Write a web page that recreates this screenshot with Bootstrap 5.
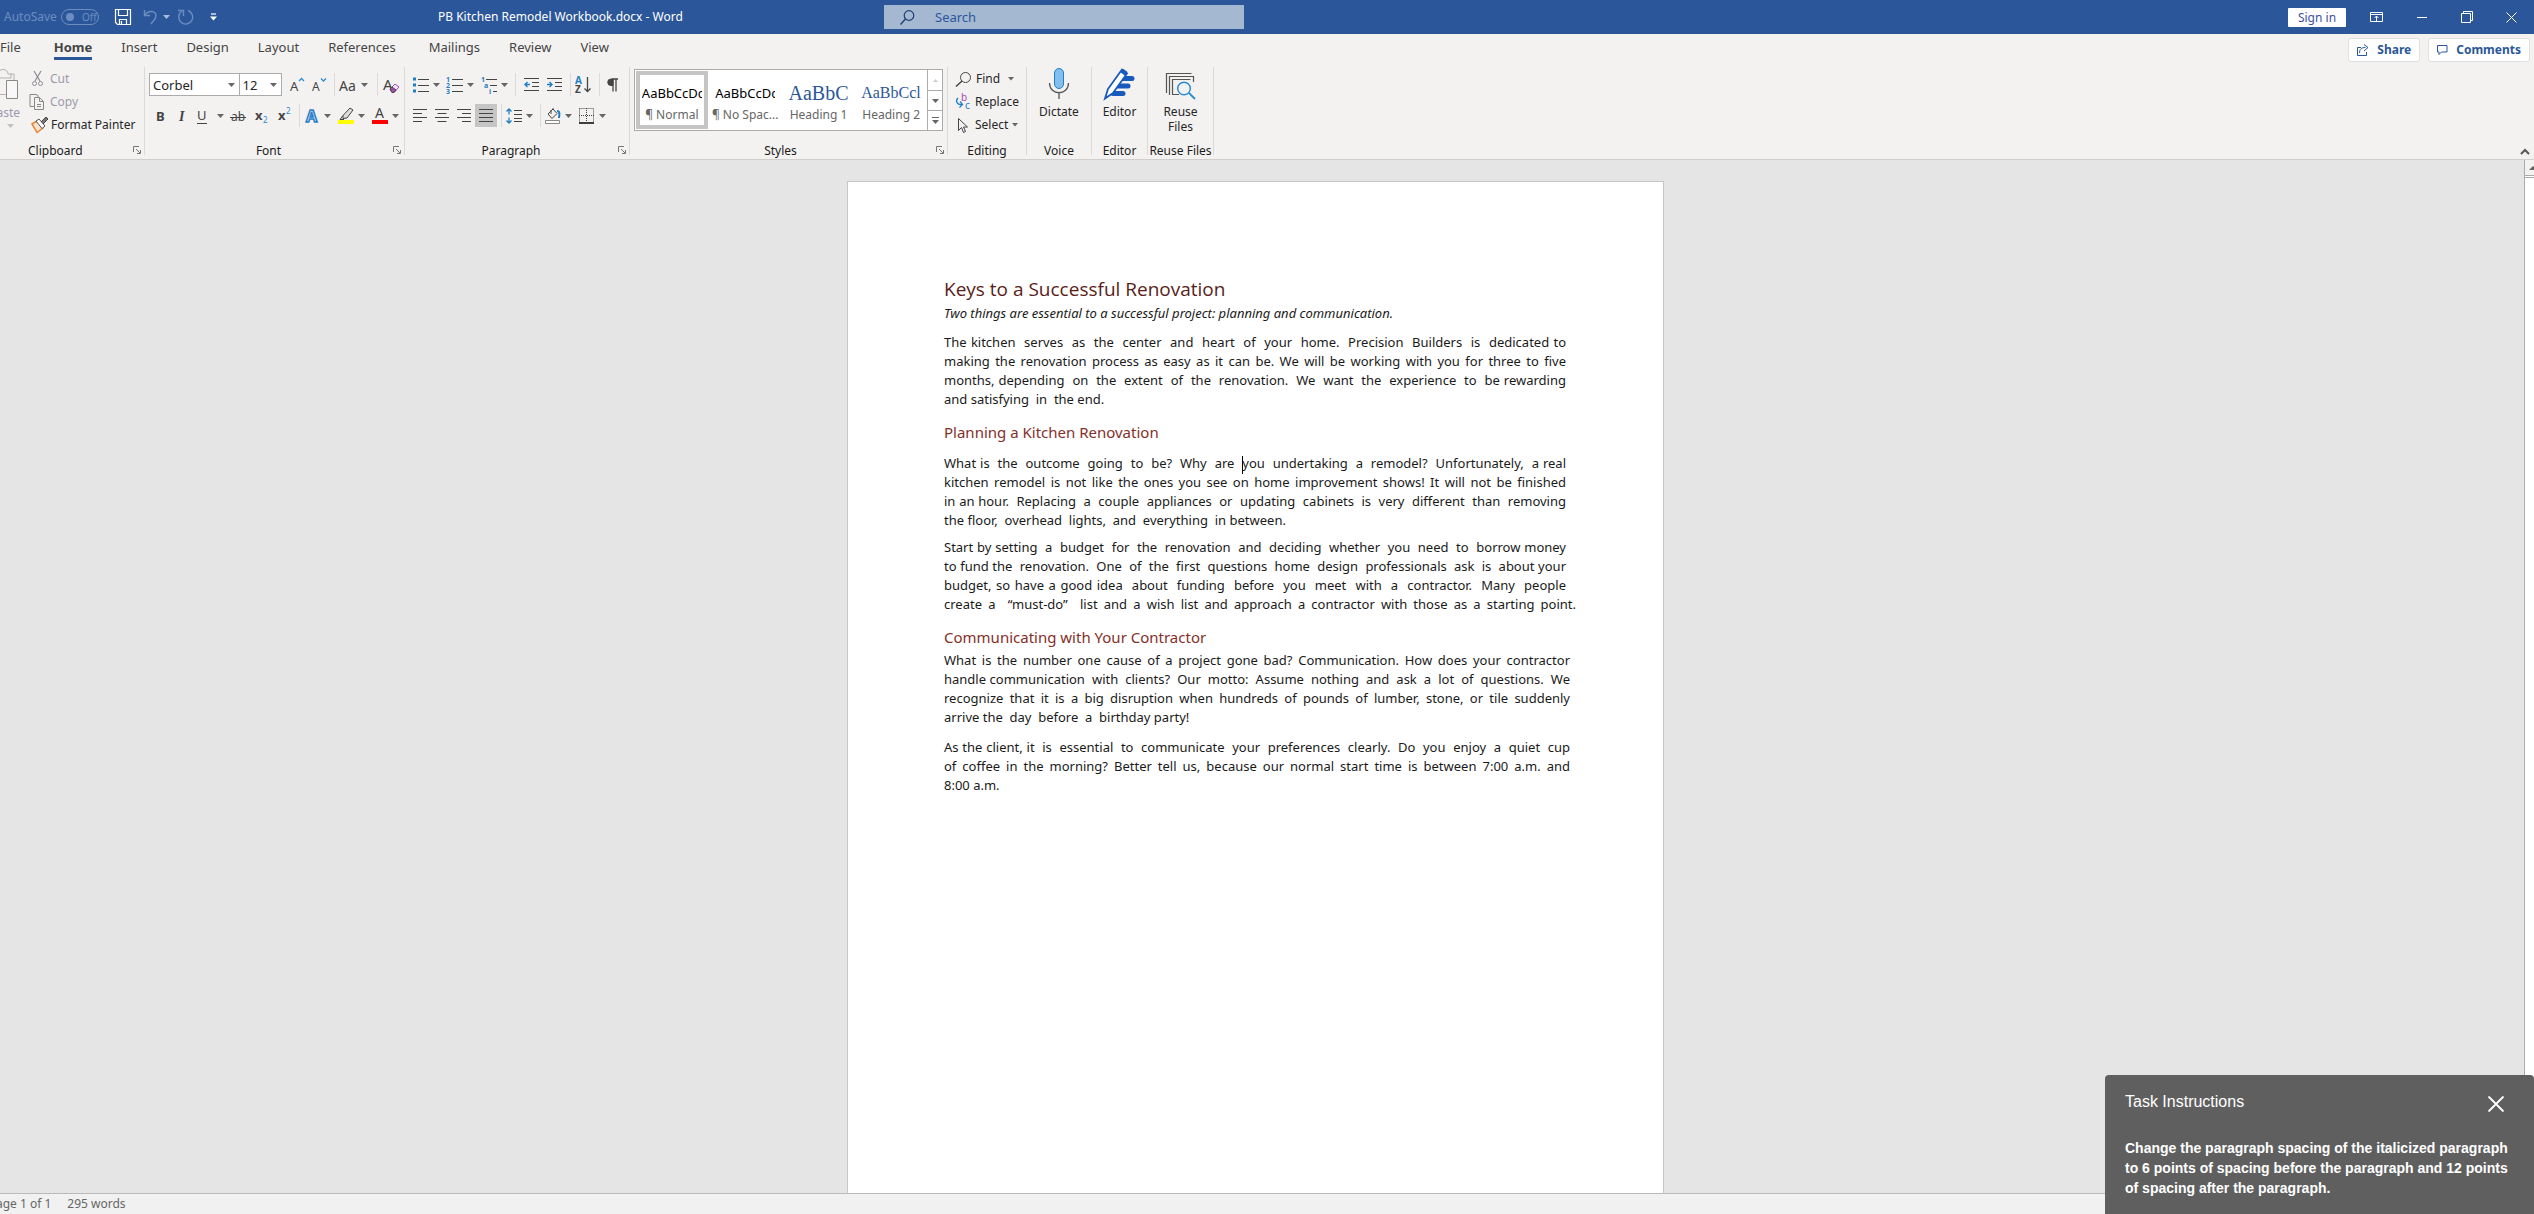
<!DOCTYPE html>
<html lang="en">
<head>
<meta charset="utf-8">
<meta name="viewport" content="width=device-width, initial-scale=1">
<title>PB Kitchen Remodel Workbook.docx - Word</title>
<link href="https://cdn.jsdelivr.net/npm/bootstrap@5.3.0/dist/css/bootstrap.min.css" rel="stylesheet">
<style>
body{font:12px/16px "Noto Sans","Open Sans",sans-serif;color:#262626;background:#e5e5e5;overflow:hidden}
svg{display:block;flex:none;fill:none;stroke:#444;overflow:visible}
button{font:inherit;color:inherit}
.titlebar{height:34px;background:#2b579a;color:#fff}
.titlebar svg{stroke:#fff}
.quick{width:438px;color:#6d8dc0}
.quick .dim{margin-left:12px}
.quick .dim svg{stroke:#6d8dc0}
.autosave{width:38px;height:16px;border:1px solid #6d8dc0;border-radius:8px;font-size:10px;line-height:12px}
.autosave i{width:8px;height:8px;border-radius:50%;background:#6d8dc0}
.docname{width:446px}
.searchbox{width:360px;height:24px;background:#a5b8d2;color:#2b579a}
.searchbox svg{stroke:#1e3f73}
.searchbox input{font-size:13px;color:#2b579a;outline:0}
.searchbox input::placeholder{color:#2b579a;opacity:1}
.signin{width:58px;height:19px;background:#fff;color:#3d4fa3;border-radius:1px;line-height:17px}
.wbtn{width:45px;height:34px}
.tabsrow{height:32px;background:#f3f2f1;color:#444;font-size:13px}
.tabsrow a{color:#444;height:26px;padding-top:5px;border-bottom:3px solid transparent}
.tabsrow a.active{font-weight:700;border-color:#2b579a}
.tabset{gap:29px;margin-left:-4px}
.pill{height:24px;background:#fff;border:1px solid #e1dfdd;border-radius:3px;color:#2b579a;font-size:12px;font-weight:700}
.pill svg{stroke:#2b579a}
.ribbon{height:94px;background:#f3f2f1;border-bottom:1px solid #d0cfce}
.grp{border-right:1px solid #dcdad8;height:88px;margin-top:1px;position:relative}
.toolpad{padding-top:6px}
.grplabel{height:16px;margin-top:auto;margin-bottom:-4px;color:#1b1b1b}
.grp .launch{position:absolute;right:2px;bottom:0;width:9px;height:9px}
.g-clip{width:145px}.g-font{width:260px}.g-para{width:225px}.g-styles{width:318px}
.g-edit{width:79px}.g-voice{width:65px}.g-editor{width:56px}.g-reuse{width:66px}
.tb{border:0;background:transparent;padding:0;height:23px;display:flex;align-items:center;justify-content:center;flex:none}
.w22{width:22px}.w24{width:24px}
.w34{width:34px;justify-content:flex-start;gap:4px}
.on{background:#c5c5c5}
.vr1{width:1px;height:23px;background:#dcdad8;flex:none}
.trow{height:23px;margin-bottom:8px}
.trow svg text,.bigtxt{stroke:none;fill:#444;font-family:"Noto Sans",sans-serif}
.muted{color:#9d9aac}
.car{fill:#666;stroke:none}
.combo{height:23px;border:1px solid #ababab;border-radius:0;background:#fff url("data:image/svg+xml,%3Csvg xmlns='http://www.w3.org/2000/svg' width='7' height='4'%3E%3Cpath d='M0 0h7L3.500 4z' fill='%23666'/%3E%3C/svg%3E") no-repeat right 4px center;appearance:none;padding:0 3px;font:13px "Noto Sans",sans-serif;color:#262626}
.c-face{width:92px}.c-size{width:44px;margin-left:-1px}
.clipcol{gap:7px;padding-top:4px}
.paste{width:24px;overflow:hidden}
.gallery{height:62px;border:1px solid #ababab;background:#fff;margin-top:2px}
.sty{width:73px;height:58px;border:4px solid transparent;background:#fff;padding:0;margin:1px 0 1px 1px;color:#666;white-space:nowrap}
.sty.sel{border-color:#c5c5c5}
.sty .smp{width:60px;height:28px;font-size:13px;line-height:28px;overflow:hidden;color:#000;margin:2px auto 0;text-align:left}
.sty .h1s,.sty .h2s{font-family:"Liberation Serif",serif;color:#2b579a}
.sty .h1s{font-size:20px;overflow:visible}
.sty .h2s{font-size:16px;overflow:visible}
.gscroll{width:15px;border-left:1px solid #ababab}
.gscroll button{height:20px;width:14px}
.gscroll button+button{border-top:1px solid #ababab}
.editcol{gap:7px}
.editcol button{height:16px;justify-content:flex-start}
.big{border:0;background:transparent;padding:0;text-align:center;line-height:15px}
.big svg{margin:0 auto 5px}
.workspace{background:#e5e5e5}
.paper{width:817px;background:#fff;border:1px solid #c6c6c6;border-bottom:0;margin-top:21px;margin-right:13px;padding:94px 0 0 96px;color:#1a1a1a}
.paper h1{font:19px/26px "Open Sans",sans-serif;color:#5a1d1a;margin:0 0 2px}
.paper h2{font:15px/20px "Noto Sans",sans-serif;color:#843029;margin:13px 0 12px}
.paper h2.tight{margin-bottom:4px}
.paper p{font-size:13px;line-height:19px;margin:0 0 11px;width:622px}
.paper p.near{margin-bottom:8px}
.paper p.intro{margin-bottom:10px}
.paper p.wider{width:626px}
.paper .ln{display:block;white-space:nowrap;text-align:justify;text-align-last:justify}
.paper .ln.long{width:632px}
.paper .end{display:block;white-space:nowrap}
.cursor{display:inline-block;width:1px;height:18px;background:#000;vertical-align:-4px;margin:-2px -1px -2px 0}
.vscroll{width:10px;border-left:1px solid #ababab;background:#fff}
.vscroll .up{height:16px;border-bottom:1px solid #ababab;background:#f3f2f1;overflow:hidden}
.vscroll .thumb{margin-top:1px;border-top:1px solid #ababab}
.status{height:21px;background:#f1f1f1;border-top:1px solid #bababa;color:#666}
.pagecount{margin-left:-4px}
.taskpanel{right:0;bottom:0;width:429px;height:139px;background:#5f5f5f;color:#fff;border-radius:4px 4px 0 0;padding:17px 26px 0 20px;font-family:"Liberation Sans",sans-serif}
.taskpanel h3{font-size:16px;line-height:20px;margin:0}
.taskpanel p{font-size:14px;line-height:20px;font-weight:700;margin:26px 0 0;white-space:nowrap}
</style>
<script src="https://cdn.jsdelivr.net/npm/bootstrap@5.3.0/dist/js/bootstrap.bundle.min.js"></script>
</head>
<body class="vh-100 d-flex flex-column">

<header class="titlebar d-flex align-items-center flex-shrink-0">
  <div class="quick d-flex align-items-center flex-shrink-0">
    <label class="ms-1" for="as">AutoSave</label>
    <button id="as" class="autosave bg-transparent p-0 d-flex align-items-center ms-1" type="button"><i class="ms-1 me-2"></i>Off</button>
    <button class="tb ms-3" type="button" aria-label="Save"><svg width="16" height="16"><path d="M.5.500h15v15h-13l-2-2zM3.500.500v6h9v-6M4.500 15.500v-5h7v5M6.500 12v3.500" stroke-width="1.200"/></svg></button>
    <span class="dim d-flex align-items-center">
      <button class="tb" type="button" aria-label="Undo"><svg width="16" height="16"><path d="M1.500 1v5.500H7M1.500 6.500C5 1 13 1 13 7c0 3-3 5-5 8" stroke-width="1.400"/></svg></button>
      <svg class="ms-1" width="7" height="4"><path d="M0 0h7L3.500 4z" fill="#a9bbd9" stroke="none"/></svg>
      <button class="tb ms-2" type="button" aria-label="Redo"><svg width="16" height="16"><path d="M0 1.500h5.500V7M10 1.500A7 7 0 1 1 3.500 2.500" stroke-width="1.400"/></svg></button>
    </span>
    <button class="tb ms-3" type="button" aria-label="Customize toolbar"><svg width="7" height="8"><path d="M1 1h5" stroke-width="1.200"/><path d="M0 3.500h7L3.500 7.500z" fill="#fff" stroke="none"/></svg></button>
  </div>
  <div class="docname flex-shrink-0">PB Kitchen Remodel Workbook.docx - Word</div>
  <div class="searchbox d-flex align-items-center ps-3">
    <svg width="15" height="15"><circle cx="9" cy="5.500" r="4.800" stroke-width="1.200"/><path d="M5.500 9L.5 14.500" stroke-width="1.300"/></svg>
    <input class="border-0 bg-transparent ms-3 p-1 flex-grow-1" type="text" placeholder="Search" aria-label="Search">
  </div>
  <div class="ms-auto d-flex align-items-center">
    <button class="signin border-0 p-0 me-2" type="button">Sign in</button>
    <button class="tb wbtn" type="button" aria-label="Ribbon display"><svg width="13" height="10"><path d="M.5.500h12v9H.5zM.5 2.500h12M6.500 9V4M4.500 6l2-2 2 2"/></svg></button>
    <button class="tb wbtn" type="button" aria-label="Minimize"><svg width="10" height="1"><path d="M0 .5h10"/></svg></button>
    <button class="tb wbtn" type="button" aria-label="Restore"><svg width="12" height="12"><path d="M.5 2.500h9v9h-9zM2.500 2.500v-2h9v9h-2"/></svg></button>
    <button class="tb wbtn" type="button" aria-label="Close"><svg width="11" height="11"><path d="M.5.500l10 10M10.500.500l-10 10"/></svg></button>
  </div>
</header>

<nav class="tabsrow d-flex flex-shrink-0">
  <div class="tabset d-flex">
    <a class="text-decoration-none ps-1" href="#">File</a>
    <a class="text-decoration-none active ms-1" href="#">Home</a>
    <a class="text-decoration-none" href="#">Insert</a>
    <a class="text-decoration-none" href="#">Design</a>
    <a class="text-decoration-none" href="#">Layout</a>
    <a class="text-decoration-none" href="#">References</a>
    <a class="text-decoration-none ms-1" href="#">Mailings</a>
    <a class="text-decoration-none" href="#">Review</a>
    <a class="text-decoration-none" href="#">View</a>
  </div>
  <div class="ms-auto d-flex pt-1 pe-1">
    <button class="pill d-flex align-items-center px-2 me-2" type="button"><svg class="me-2" width="12" height="12"><path d="M4 3.500H.5v8h9V8M2.500 9c0-4 2-5.500 6-5.500M7 .5l4 3-4 3.500"/></svg>Share</button>
    <button class="pill d-flex align-items-center px-2" type="button"><svg class="me-2" width="11" height="10"><path d="M.5.500h9.500v6.500H4.500l-2.500 2.500V7H.5z"/></svg>Comments</button>
  </div>
</nav>

<div class="ribbon d-flex flex-shrink-0">
  <section class="grp g-clip d-flex flex-column flex-shrink-0">
    <div class="d-flex">
      <button class="paste big muted d-block" type="button" aria-label="Paste"><svg width="24" height="32"><path d="M0 26.500h14M14 26V6h-4M-6 6h4c0-6 10-6 10 0h3v4H-8" stroke="#b5b3b0"/><path d="M6.500 12.500h11v18h-11z" fill="#f8f8f8" stroke="#8a8886"/></svg><span class="d-flex justify-content-end pe-1">Paste</span><svg class="mt-1" width="7" height="4"><path d="M-2 0h7L1.500 4z" fill="#c2c0be" stroke="none"/></svg></button>
      <div class="clipcol d-flex flex-column ps-1">
        <button class="tb justify-content-start muted p-0 h-auto" type="button"><svg class="me-1 ms-1" width="14" height="16"><path d="M2 0l6 10M9 0L3 10" stroke="#8f8d96" stroke-width="1.300"/><circle cx="2.500" cy="12.500" r="2" stroke="#8f8d96"/><circle cx="8.500" cy="12.500" r="2" stroke="#8f8d96"/></svg>Cut</button>
        <button class="tb justify-content-start muted p-0 h-auto" type="button"><svg class="me-1 ms-1" width="14" height="16"><path d="M6 3.500V1.500L4 .500h-6v12h4M2.500 3.500h5l4 4v8h-9zM7.500 3.500v4h4M5 10.500h4M5 12.500h4" stroke="#8a8886"/></svg>Copy</button>
        <button class="tb justify-content-start p-0 h-auto" type="button"><svg class="me-1 ms-1" width="15" height="16"><path d="M0 7l5-3 6 7-6 4.500z" fill="#fce4cc" stroke="#e8833a" stroke-width="1.500"/><path d="M4 4l3-2 6 7-3 2.500z" fill="#fff" stroke="#555"/><path d="M9 5l5-5 2 2-5 5" fill="#777"/></svg>Format Painter</button>
      </div>
    </div>
    <div class="grplabel ps-4 ms-1">Clipboard</div>
    <svg class="launch" viewBox="0 0 9 9"><path d="M.5 6V.500H6M3 3l4 4M7.500 4v3.500H4" stroke="#777"/></svg>
  </section>

  <section class="grp g-font d-flex flex-column flex-shrink-0 ps-1 toolpad">
    <div class="trow d-flex align-items-center">
      <select class="combo c-face" aria-label="Font"><option>Corbel</option></select>
      <select class="combo c-size" aria-label="Font size"><option>12</option></select>
      <button class="tb w22 ms-1" type="button" aria-label="Grow font"><svg width="14" height="16"><text x="0" y="14" font-size="13">A</text><path d="M9 4l2.500-2.500L14 4" stroke="#2a8dd4" stroke-width="1.300"/></svg></button>
      <button class="tb w22" type="button" aria-label="Shrink font"><svg width="14" height="16"><text x="0" y="14" font-size="12">A</text><path d="M9 1.500L11.500 4 14 1.500" stroke="#2a8dd4" stroke-width="1.300"/></svg></button>
      <span class="vr1 mx-1"></span>
      <button class="tb w34" type="button" aria-label="Change case"><svg width="18" height="16"><text x="0" y="14" font-size="14">Aa</text></svg><svg class="car" width="7" height="4"><path d="M0 0h7L3.500 4z"/></svg></button>
      <span class="vr1 mx-1"></span>
      <button class="tb w22" type="button" aria-label="Clear formatting"><svg width="20" height="16"><text x="0" y="13" font-size="15">A</text><path d="M7 12l5-5 4 3-5 5.500H9z" fill="#f3e3f6" stroke="#a44cb5"/><path d="M7 12l2-2 4 3-2 2.500H9z" fill="#a44cb5"/></svg></button>
    </div>
    <div class="trow d-flex align-items-center">
      <button class="tb w22" type="button" aria-label="Bold"><svg width="9" height="16"><text x="0" y="13" font-size="13" font-weight="700">B</text></svg></button>
      <button class="tb w22" type="button" aria-label="Italic"><svg width="8" height="16"><text x="1" y="13" font-size="14" style="font-family:'Liberation Serif'" font-style="italic" font-weight="700">I</text></svg></button>
      <button class="tb w34" type="button" aria-label="Underline"><svg width="16" height="16"><text x="4" y="12" font-size="13">U</text><path d="M4 15.500h10"/></svg><svg class="car ms-1" width="7" height="4"><path d="M0 0h7L3.500 4z"/></svg></button>
      <button class="tb w22" type="button" aria-label="Strikethrough"><svg width="16" height="16"><text x="1" y="13" font-size="12">ab</text><path d="M0 9.500h16"/></svg></button>
      <button class="tb w24" type="button" aria-label="Subscript"><svg width="12" height="16"><text x="0" y="12" font-size="13" font-weight="700">x</text><text x="8" y="15" font-size="8" style="fill:#2a8dd4">2</text></svg></button>
      <button class="tb w22" type="button" aria-label="Superscript"><svg width="12" height="16"><text x="0" y="12" font-size="13" font-weight="700">x</text><text x="8" y="6" font-size="8" style="fill:#2a8dd4">2</text></svg></button>
      <span class="vr1 mx-1"></span>
      <button class="tb w34" type="button" aria-label="Text effects"><svg width="16" height="16"><text x="2" y="14" font-size="16" font-weight="700" style="fill:#d9ecfa;stroke:#2b7cc8;stroke-width:1.500px">A</text></svg><svg class="car" width="7" height="4"><path d="M0 0h7L3.500 4z"/></svg></button>
      <button class="tb w34" type="button" aria-label="Highlight"><svg width="16" height="16"><path d="M0 12h16v4H0z" fill="#ff0" stroke="none"/><path d="M5 7.500L12 0l3 2-6 8-4 .5zM5 7.500l-3 4h4" fill="#ddd"/></svg><svg class="car" width="7" height="4"><path d="M0 0h7L3.500 4z"/></svg></button>
      <button class="tb w34" type="button" aria-label="Font color"><svg width="16" height="16"><path d="M0 12h16v4H0z" fill="#f00" stroke="none"/><text x="3" y="10" font-size="14">A</text></svg><svg class="car" width="7" height="4"><path d="M0 0h7L3.500 4z"/></svg></button>
    </div>
    <div class="grplabel text-center pe-3">Font</div>
    <svg class="launch" viewBox="0 0 9 9"><path d="M.5 6V.500H6M3 3l4 4M7.500 4v3.500H4" stroke="#777"/></svg>
  </section>

  <section class="grp g-para d-flex flex-column flex-shrink-0 ps-1 toolpad">
    <div class="trow d-flex align-items-center">
      <button class="tb w34 ms-1" type="button" aria-label="Bullets"><svg width="16" height="16"><path d="M0 2h3M0 8h3M0 14h3" stroke="#1f7fc4" stroke-width="3"/><path d="M5 2.500h11M5 8.500h11M5 14.500h11"/></svg><svg class="car" width="7" height="4"><path d="M0 0h7L3.500 4z"/></svg></button>
      <button class="tb w34" type="button" aria-label="Numbering"><svg width="16" height="16"><text x="-1" y="5" font-size="7" font-weight="700" style="fill:#1f7fc4">1</text><text x="-1" y="11" font-size="7" font-weight="700" style="fill:#1f7fc4">2</text><text x="-1" y="17" font-size="7" font-weight="700" style="fill:#1f7fc4">3</text><path d="M5 2.500h11M5 8.500h11M5 14.500h11"/></svg><svg class="car" width="7" height="4"><path d="M0 0h7L3.500 4z"/></svg></button>
      <button class="tb w34" type="button" aria-label="Multilevel list"><svg width="16" height="16"><text x="0" y="5" font-size="7" font-weight="700" style="fill:#1f7fc4">1</text><text x="3" y="11" font-size="7" font-weight="700" style="fill:#1f7fc4">a</text><text x="8" y="17" font-size="7" font-weight="700" style="fill:#1f7fc4">i</text><path d="M5 2.500h11M9 8.500h7M12 14.500h4"/></svg><svg class="car" width="7" height="4"><path d="M0 0h7L3.500 4z"/></svg></button>
      <span class="vr1"></span>
      <button class="tb w24 ms-1" type="button" aria-label="Decrease indent"><svg width="16" height="14"><path d="M0 .5h15M8 4.500h7M8 8.500h7M0 12.500h15"/><path d="M6 6.500H1M3.500 4L1 6.500 3.500 9" stroke="#1f7fc4" stroke-width="1.400"/></svg></button>
      <button class="tb w22" type="button" aria-label="Increase indent"><svg width="16" height="14"><path d="M0 .5h15M8 4.500h7M8 8.500h7M0 12.500h15"/><path d="M0 6.500h5M2.500 4L5 6.500 2.500 9" stroke="#1f7fc4" stroke-width="1.400"/></svg></button>
      <span class="vr1 ms-1"></span>
      <button class="tb w24" type="button" aria-label="Sort"><svg width="16" height="18"><text x="0" y="8" font-size="10" font-weight="700" style="fill:#1f7fc4">A</text><text x="0" y="17" font-size="10" font-weight="700">Z</text><path d="M12.500 1v14.500M9.500 12.500l3 3 3-3" stroke-width="1.300"/></svg></button>
      <span class="vr1 ms-1"></span>
      <button class="tb w24" type="button" aria-label="Show paragraph marks"><svg width="11" height="14"><path d="M5 1H11M6 1v12.500M9 1v12.500" stroke-width="1.300"/><path d="M6 1H4a3.200 3.200 0 0 0 0 6.500h2z" fill="#444"/></svg></button>
    </div>
    <div class="trow d-flex align-items-center">
      <button class="tb w22" type="button" aria-label="Align left"><svg width="14" height="14"><path d="M0 .5h14M0 4.500h9M0 8.500h14M0 12.500h9"/></svg></button>
      <button class="tb w22" type="button" aria-label="Center"><svg width="14" height="14"><path d="M0 .5h14M2.500 4.500h9M0 8.500h14M2.500 12.500h9"/></svg></button>
      <button class="tb w22" type="button" aria-label="Align right"><svg width="14" height="14"><path d="M0 .5h14M5 4.500h9M0 8.500h14M5 12.500h9"/></svg></button>
      <button class="tb w22 on" type="button" aria-label="Justify"><svg width="14" height="14"><path d="M0 .5h14M0 4.500h14M0 8.500h14M0 12.500h14"/></svg></button>
      <span class="vr1 mx-1"></span>
      <button class="tb w34" type="button" aria-label="Line spacing"><svg width="16" height="16"><path d="M3 1v5.500M.5 3.500L3 1l2.500 2.500M3 9.500V15M.5 12.500L3 15l2.500-2.500" stroke="#1f7fc4" stroke-width="1.300"/><path d="M8 2.500h8M8 6.500h8M8 10.500h8M8 13.500h8"/></svg><svg class="car" width="7" height="4"><path d="M0 0h7L3.500 4z"/></svg></button>
      <span class="vr1 me-1"></span>
      <button class="tb w34" type="button" aria-label="Shading"><svg width="16" height="16"><path d="M.5 12.500h14v3H.5z" fill="#fff" stroke="#888"/><path d="M3 6l5-5 4 4.500-5 5zM8 1V0M6 2v4"/><path d="M12 3c3 0 2.500 3 2 7" stroke="#1f7fc4" stroke-width="2"/></svg><svg class="car" width="7" height="4"><path d="M0 0h7L3.500 4z"/></svg></button>
      <button class="tb w34" type="button" aria-label="Borders"><svg width="16" height="16"><path d="M.5.500h14v14M.5.500v14M7.500 0v14M0 7.500h15" stroke-dasharray="1 1"/><path d="M0 15h15" stroke="#000" stroke-width="1.500"/></svg><svg class="car" width="7" height="4"><path d="M0 0h7L3.500 4z"/></svg></button>
    </div>
    <div class="grplabel text-center pe-3">Paragraph</div>
    <svg class="launch" viewBox="0 0 9 9"><path d="M.5 6V.500H6M3 3l4 4M7.500 4v3.500H4" stroke="#777"/></svg>
  </section>

  <section class="grp g-styles d-flex flex-column flex-shrink-0 ps-1 pe-1">
    <div class="gallery d-flex">
      <button class="sty sel" type="button"><div class="smp">AaBbCcDc</div><div>¶ Normal</div></button>
      <button class="sty" type="button"><div class="smp">AaBbCcDc</div><div class="d-flex justify-content-center">¶ No Spac...</div></button>
      <button class="sty" type="button"><div class="smp h1s">AaBbC</div><div>Heading 1</div></button>
      <button class="sty" type="button"><div class="smp h2s">AaBbCcl</div><div>Heading 2</div></button>
      <div class="gscroll ms-auto d-flex flex-column">
        <button class="tb" type="button" aria-label="Previous styles"><svg width="7" height="4"><path d="M1 4h5L3.500 1z" fill="#ccc" stroke="none"/></svg></button>
        <button class="tb" type="button" aria-label="Next styles"><svg class="car" width="7" height="4"><path d="M0 0h7L3.500 4z"/></svg></button>
        <button class="tb" type="button" aria-label="More styles"><svg class="car" width="7" height="7"><path d="M0 0h7v1H0zM0 3h7L3.500 7z"/></svg></button>
      </div>
    </div>
    <div class="grplabel text-center pe-3">Styles</div>
    <svg class="launch" viewBox="0 0 9 9"><path d="M.5 6V.500H6M3 3l4 4M7.500 4v3.500H4" stroke="#777"/></svg>
  </section>

  <section class="grp g-edit d-flex flex-column flex-shrink-0 ps-2">
    <div class="editcol d-flex flex-column mt-1">
      <button class="tb" type="button"><svg class="me-1" width="16" height="15"><circle cx="9.500" cy="5.500" r="5"/><path d="M6 9L0 14.500" stroke-width="1.500"/></svg>Find<svg class="car ms-2" width="7" height="4"><path d="M0 0h6L3 3.500z"/></svg></button>
      <button class="tb" type="button"><svg class="me-1" width="15" height="16"><g class="bigtxt"><text x="5" y="7" font-size="10" style="fill:#a44cb5">b</text><text x="9" y="15" font-size="10" style="fill:#1f7fc4">c</text></g><path d="M2 4c-3 3-1 7 4 6.500M4 7.500l2.500 3-3 3" stroke="#1f7fc4" stroke-width="1.300"/></svg>Replace</button>
      <button class="tb" type="button"><svg class="me-1" width="15" height="15"><path d="M2.500.500v12l3-3 2 5 2-1-2-4.500h4z"/></svg>Select<svg class="car ms-1" width="6" height="4"><path d="M0 0h6L3 3.500z"/></svg></button>
    </div>
    <div class="grplabel text-center pe-2">Editing</div>
  </section>

  <section class="grp g-voice d-flex flex-column flex-shrink-0">
    <button class="big" type="button"><svg width="20" height="32"><rect x="5.500" y="1.500" width="9" height="20" rx="4.500" fill="#83beec" stroke="#1f7fc4"/><path d="M.5 16c0 13 19 13 19 0M10 26v6" stroke="#555" stroke-width="1.300"/></svg>Dictate</button>
    <div class="grplabel text-center">Voice</div>
  </section>
  <section class="grp g-editor d-flex flex-column flex-shrink-0">
    <button class="big" type="button"><svg width="31" height="32"><path d="M15 11.500h13M12 19h12M9 26.500h10" stroke="#185abd" stroke-width="5" stroke-linecap="round"/><path d="M4 22L18 2.500l5 4L9 26l-8 5.500z" fill="#fff" stroke="#185abd" stroke-width="1.800"/><path d="M16 5l3.500-3 4 3-2 4z" fill="#185abd" stroke="none"/></svg>Editor</button>
    <div class="grplabel text-center">Editor</div>
  </section>
  <section class="grp g-reuse d-flex flex-column flex-shrink-0">
    <button class="big" type="button"><svg width="30" height="32"><path d="M.5 26V6.500h25M3.500 28V9.500h24V15M6.500 27V12.500h18M6 27.500h7" stroke="#555" stroke-width="1.200"/><circle cx="18" cy="21.500" r="6.300" fill="#f3f2f1" stroke="#2a8dd4" stroke-width="1.500"/><path d="M23 26l6 6" stroke="#2a8dd4" stroke-width="1.800"/></svg>Reuse<br>Files</button>
    <div class="grplabel text-center text-nowrap">Reuse Files</div>
  </section>
  <button class="tb ms-auto align-self-end mt-auto me-1 h-auto pb-1" type="button" aria-label="Collapse the ribbon"><svg width="10" height="6"><path d="M1 5l4-4 4 4" stroke="#555" stroke-width="2"/></svg></button>
</div>

<main class="workspace d-flex flex-grow-1 overflow-hidden">
  <div class="flex-grow-1 d-flex justify-content-center">
    <article class="paper">
      <h1>Keys to a Successful Renovation</h1>
      <p class="fst-italic intro">Two things are essential to a successful project: planning and communication.</p>
      <p><span class="ln">The kitchen&nbsp; serves&nbsp; as&nbsp; the&nbsp; center&nbsp; and&nbsp; heart&nbsp; of&nbsp; your&nbsp; home.&nbsp; Precision&nbsp; Builders&nbsp; is&nbsp; dedicated to</span>
        <span class="ln">making the renovation process as easy as it can be. We will be working with you for three to five</span>
        <span class="ln">months, depending&nbsp; on&nbsp; the&nbsp; extent&nbsp; of&nbsp; the&nbsp; renovation.&nbsp; We&nbsp; want&nbsp; the&nbsp; experience&nbsp; to&nbsp; be rewarding</span>
        <span class="end">and satisfying&nbsp; in&nbsp; the end.</span></p>
      <h2>Planning a Kitchen Renovation</h2>
      <p class="near"><span class="ln">What is&nbsp; the&nbsp; outcome&nbsp; going&nbsp; to&nbsp; be?&nbsp; Why&nbsp; are&nbsp; <span class="cursor"></span>you&nbsp; undertaking&nbsp; a&nbsp; remodel?&nbsp; Unfortunately,&nbsp; a real</span>
        <span class="ln">kitchen remodel is not like the ones you see on home improvement shows! It will not be finished</span>
        <span class="ln">in an hour.&nbsp; Replacing&nbsp; a&nbsp; couple&nbsp; appliances&nbsp; or&nbsp; updating&nbsp; cabinets&nbsp; is&nbsp; very&nbsp; different&nbsp; than&nbsp; removing</span>
        <span class="end">the floor,&nbsp; overhead&nbsp; lights,&nbsp; and&nbsp; everything&nbsp; in between.</span></p>
      <p><span class="ln">Start by setting&nbsp; a&nbsp; budget&nbsp; for&nbsp; the&nbsp; renovation&nbsp; and&nbsp; deciding&nbsp; whether&nbsp; you&nbsp; need&nbsp; to&nbsp; borrow money</span>
        <span class="ln">to fund the&nbsp; renovation.&nbsp; One&nbsp; of&nbsp; the&nbsp; first&nbsp; questions&nbsp; home&nbsp; design&nbsp; professionals&nbsp; ask&nbsp; is&nbsp; about your</span>
        <span class="ln">budget, so have a good idea&nbsp; about&nbsp; funding&nbsp; before&nbsp; you&nbsp; meet&nbsp; with&nbsp; a&nbsp; contractor.&nbsp; Many&nbsp; people</span>
        <span class="ln long">create a&nbsp; “must-do”&nbsp; list and a wish list and approach a contractor with those as a starting point.</span></p>
      <h2 class="tight">Communicating with Your Contractor</h2>
      <p class="wider"><span class="ln">What is the number one cause of a project gone bad? Communication. How does your contractor</span>
        <span class="ln">handle communication&nbsp; with&nbsp; clients?&nbsp; Our&nbsp; motto:&nbsp; Assume&nbsp; nothing&nbsp; and&nbsp; ask&nbsp; a&nbsp; lot&nbsp; of&nbsp; questions.&nbsp; We</span>
        <span class="ln">recognize that it is a big disruption when hundreds of pounds of lumber, stone, or tile suddenly</span>
        <span class="end">arrive the&nbsp; day&nbsp; before&nbsp; a&nbsp; birthday party!</span></p>
      <p class="wider"><span class="ln">As the client, it&nbsp; is&nbsp; essential&nbsp; to&nbsp; communicate&nbsp; your&nbsp; preferences&nbsp; clearly.&nbsp; Do&nbsp; you&nbsp; enjoy&nbsp; a&nbsp; quiet&nbsp; cup</span>
        <span class="ln">of coffee in the morning? Better tell us, because our normal start time is between 7:00 a.m. and</span>
        <span class="end">8:00 a.m.</span></p>
    </article>
  </div>
  <div class="vscroll flex-shrink-0">
    <div class="up d-flex align-items-center ps-1"><svg class="car" width="8" height="4"><path d="M0 4h8L4 0z"/></svg></div>
    <div class="thumb"></div>
  </div>
</main>

<footer class="status d-flex align-items-center flex-shrink-0">
  <span class="pagecount">age 1 of 1</span><span class="ms-3">295 words</span>
</footer>

<aside class="taskpanel position-fixed">
  <div class="d-flex justify-content-between align-items-center">
    <h3 class="fw-normal">Task Instructions</h3>
    <button class="border-0 bg-transparent p-0 mt-1 me-1" type="button" aria-label="Close instructions"><svg width="16" height="16"><path d="M.5.500l15 15M15.500.500l-15 15" stroke="#fff" stroke-width="1.800"/></svg></button>
  </div>
  <p>Change the paragraph spacing of the italicized paragraph<br>to 6 points of spacing before the paragraph and 12 points<br>of spacing after the paragraph.</p>
</aside>
</body>
</html>
